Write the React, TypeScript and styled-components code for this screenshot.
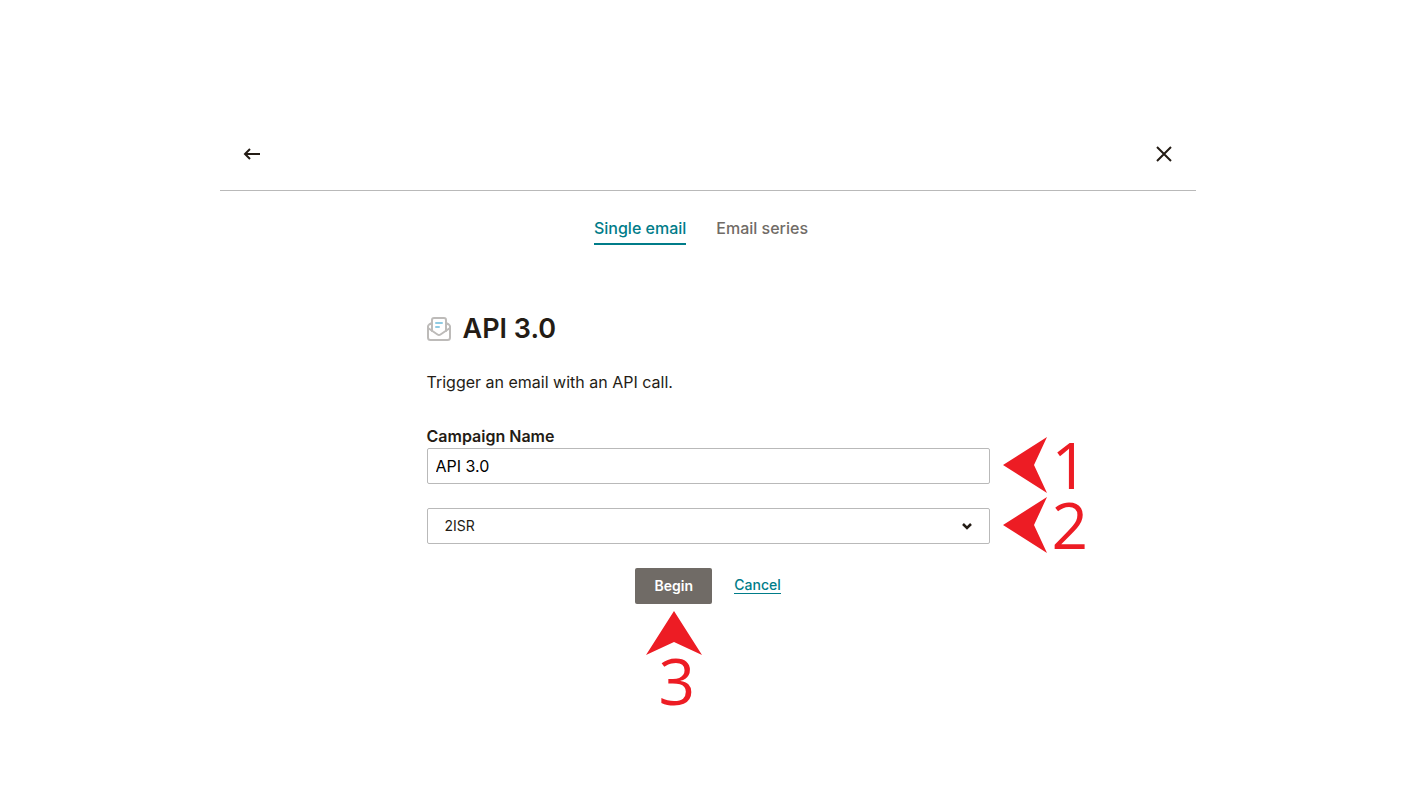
import React, { useState } from "react";
import styled, { createGlobalStyle } from "styled-components";

const ink = "#241c15";
const teal = "#007c89";
const grey = "#706b66";
const line = "#b9b9b9";
const red = "#ed1c24";

const GlobalStyle = createGlobalStyle`
  *, *::before, *::after { box-sizing: border-box; }
  body {
    margin: 0;
    background: #fff;
    color: ${ink};
    font-family: Inter, "Liberation Sans", sans-serif;
    font-size: 16px;
    line-height: 24px;
  }
`;

const Dialog = styled.main`
  max-width: 976px;
  margin: 0 auto;
  padding: 118px 0 112px;
`;

const Header = styled.header`
  display: flex;
  align-items: center;
  justify-content: space-between;
  height: 73px;
  padding: 0 20px;
  border-bottom: 1px solid ${line};
`;

const IconButton = styled.button`
  display: flex;
  padding: 0;
  border: 0;
  background: none;
  color: ${ink};
  cursor: pointer;
`;

const Tabs = styled.nav`
  display: flex;
  justify-content: center;
  gap: 30px;
  padding: 25px 14px 0 0;
`;

const Tab = styled.button<{ $active: boolean }>`
  padding: 0 0 3px;
  border: 0;
  border-bottom: 2px solid ${(p) => (p.$active ? teal : "transparent")};
  background: none;
  color: ${(p) => (p.$active ? teal : grey)};
  font: 500 16px/24px Inter, "Liberation Sans", sans-serif;
  cursor: pointer;
`;

const Form = styled.form`
  max-width: 563px;
  margin: 0 auto;
  padding-top: 66px;
`;

const TitleRow = styled.div`
  display: flex;
  align-items: center;
  gap: 12px;
`;

const Title = styled.h1`
  margin: 0;
  font-size: 27px;
  font-weight: 600;
  line-height: 36px;
`;

const Description = styled.p`
  margin: 23px 0 30px;
`;

const Label = styled.label`
  display: block;
  font-weight: 600;
`;

const Field = styled.div`
  position: relative;
  margin-bottom: 24px;
`;

const TextInput = styled.input`
  display: block;
  width: 100%;
  height: 36px;
  padding: 0 8px;
  border: 1px solid ${line};
  border-radius: 2px;
  background: #fff;
  color: #000;
  font: 400 16px/24px Inter, "Liberation Sans", sans-serif;
`;

const Select = styled.select`
  display: block;
  width: 100%;
  height: 36px;
  padding: 0 40px 0 17px;
  border: 1px solid ${line};
  border-radius: 2px;
  appearance: none;
  background: #fff;
  color: ${ink};
  font: 400 14px/24px Inter, "Liberation Sans", sans-serif;
`;

const Chevron = styled.svg`
  position: absolute;
  top: 14px;
  right: 18px;
  pointer-events: none;
`;

const Actions = styled.div`
  display: flex;
  align-items: center;
  justify-content: center;
  gap: 22px;
`;

const ButtonWrap = styled.div`
  position: relative;
`;

const BeginButton = styled.button`
  display: block;
  width: 77px;
  height: 36px;
  padding: 0;
  border: 0;
  border-radius: 2px;
  background: ${grey};
  color: #fff;
  font: 600 14px/24px Inter, "Liberation Sans", sans-serif;
  cursor: pointer;
`;

const CancelLink = styled.a`
  padding-bottom: 1px;
  margin-bottom: 2px;
  border-bottom: 1px solid ${teal};
  color: ${teal};
  font-size: 14px;
  font-weight: 500;
  line-height: 15px;
  text-decoration: none;
`;

const Marker = styled.div<{ $below?: boolean }>`
  position: absolute;
  display: flex;
  align-items: center;
  flex-direction: ${(p) => (p.$below ? "column" : "row")};
  gap: ${(p) => (p.$below ? "0" : "5px")};
  ${(p) =>
    p.$below
      ? "top: calc(100% + 7px); left: 50%; transform: translateX(-50%);"
      : "left: calc(100% + 13px); top: calc(50% - 1px); transform: translateY(-50%);"}
  color: ${red};
  font: 400 64px/52px "Open Sans", "Noto Sans", sans-serif;
  pointer-events: none;
`;

const StepNumber = styled.span<{ $below?: boolean }>`
  padding-left: ${(p) => (p.$below ? "6px" : "0")};
`;

function Callout({ step, below }: { step: number; below?: boolean }) {
  return (
    <Marker $below={below}>
      {below ? (
        <svg width="56" height="44" viewBox="0 0 56 44" fill="currentColor" aria-hidden="true">
          <path d="M28 0 56 44 28 31 0 44z" />
        </svg>
      ) : (
        <svg width="44" height="56" viewBox="0 0 44 56" fill="currentColor" aria-hidden="true">
          <path d="M0 28 44 0 31 28 44 56z" />
        </svg>
      )}
      <StepNumber $below={below}>{step}</StepNumber>
    </Marker>
  );
}

function EnvelopeIcon() {
  return (
    <svg width="24" height="24" viewBox="0 0 24 24" fill="none" strokeWidth="2" strokeLinejoin="round" strokeLinecap="round" aria-hidden="true">
      <path d="M5 6 2.200 7.500Q1 8.200 1 9.500V20.500Q1 23 3.500 23H20.500Q23 23 23 20.500V9.500Q23 8.200 21.800 7.500L19 6" stroke="#bdbbb9" />
      <path d="M5 14V3Q5 1 7 1H17Q19 1 19 3V14" stroke="#bdbbb9" />
      <path d="M1 11 10.500 17.500Q12 18.500 13.500 17.500L23 11" stroke="#bdbbb9" />
      <path d="M9 6H15M9 10H12" stroke="#8fcbe3" />
    </svg>
  );
}

export default function App() {
  const [tab, setTab] = useState("Single email");
  const [name, setName] = useState("API 3.0");

  return (
    <>
      <GlobalStyle />
      <Dialog>
        <Header>
          <IconButton type="button" aria-label="Back">
            <svg width="24" height="24" viewBox="0 0 24 24" fill="none" stroke="currentColor" strokeWidth="2" aria-hidden="true">
              <path d="M20 12H5M10 7 5 12 10 17" />
            </svg>
          </IconButton>
          <IconButton type="button" aria-label="Close">
            <svg width="24" height="24" viewBox="0 0 24 24" fill="none" stroke="currentColor" strokeWidth="2" aria-hidden="true">
              <path d="M5 5 19 19M19 5 5 19" />
            </svg>
          </IconButton>
        </Header>
        <Tabs aria-label="Email type">
          {["Single email", "Email series"].map((t) => (
            <Tab key={t} type="button" $active={t === tab} onClick={() => setTab(t)}>
              {t}
            </Tab>
          ))}
        </Tabs>
        <Form onSubmit={(e) => e.preventDefault()}>
          <TitleRow>
            <EnvelopeIcon />
            <Title>API 3.0</Title>
          </TitleRow>
          <Description>Trigger an email with an API call.</Description>
          <Label htmlFor="campaign-name">Campaign Name</Label>
          <Field>
            <TextInput id="campaign-name" value={name} onChange={(e) => setName(e.target.value)} />
            <Callout step={1} />
          </Field>
          <Field>
            <Select aria-label="Audience" defaultValue="2ISR">
              <option>2ISR</option>
            </Select>
            <Chevron width="10" height="8" viewBox="0 0 10 8" fill="none" stroke={ink} strokeWidth="2.500" aria-hidden="true">
              <path d="M1 2 5 6 9 2" />
            </Chevron>
            <Callout step={2} />
          </Field>
          <Actions>
            <ButtonWrap>
              <BeginButton type="submit">Begin</BeginButton>
              <Callout step={3} below />
            </ButtonWrap>
            <CancelLink href="#cancel">Cancel</CancelLink>
          </Actions>
        </Form>
      </Dialog>
    </>
  );
}
